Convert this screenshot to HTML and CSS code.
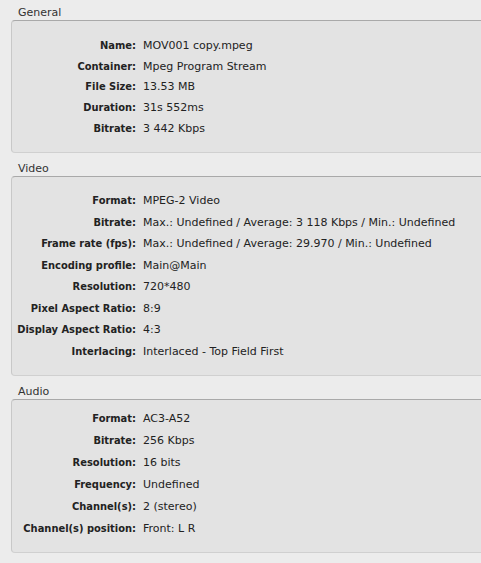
FILE: index.html
```html
<!DOCTYPE html>
<html>
<head>
<meta charset="utf-8">
<link rel="stylesheet" href="styles.css">
</head>
<body>
<section class="group">
  <div class="title">General</div>
  <div class="box general">
    <div class="k">Name:</div><div class="v">MOV001 copy.mpeg</div>
    <div class="k">Container:</div><div class="v">Mpeg Program Stream</div>
    <div class="k">File Size:</div><div class="v">13.53 MB</div>
    <div class="k">Duration:</div><div class="v">31s 552ms</div>
    <div class="k">Bitrate:</div><div class="v">3 442 Kbps</div>
  </div>
</section>
<section class="group">
  <div class="title">Video</div>
  <div class="box video">
    <div class="k">Format:</div><div class="v">MPEG-2 Video</div>
    <div class="k">Bitrate:</div><div class="v">Max.: Undefined / Average: 3 118 Kbps / Min.: Undefined</div>
    <div class="k">Frame rate (fps):</div><div class="v">Max.: Undefined / Average: 29.970 / Min.: Undefined</div>
    <div class="k">Encoding profile:</div><div class="v">Main@Main</div>
    <div class="k">Resolution:</div><div class="v">720*480</div>
    <div class="k">Pixel Aspect Ratio:</div><div class="v">8:9</div>
    <div class="k">Display Aspect Ratio:</div><div class="v">4:3</div>
    <div class="k">Interlacing:</div><div class="v">Interlaced - Top Field First</div>
  </div>
</section>
<section class="group">
  <div class="title">Audio</div>
  <div class="box audio">
    <div class="k">Format:</div><div class="v">AC3-A52</div>
    <div class="k">Bitrate:</div><div class="v">256 Kbps</div>
    <div class="k">Resolution:</div><div class="v">16 bits</div>
    <div class="k">Frequency:</div><div class="v">Undefined</div>
    <div class="k">Channel(s):</div><div class="v">2 (stereo)</div>
    <div class="k">Channel(s) position:</div><div class="v">Front: L R</div>
  </div>
</section>
</body>
</html>
```
FILE: styles.css
```css
html, body {
  margin: 0;
  padding: 0;
  background: #ececec;
  overflow: hidden;
}
body {
  width: 481px;
  height: 563px;
  font-family: "DejaVu Sans", "Lucida Grande", sans-serif;
  font-size: 11px;
  color: #222;
}
.group {
  margin-bottom: 3px;
}
.title {
  height: 20px;
  line-height: 25px;
  padding-left: 18px;
  color: #333;
}
.box {
  margin-left: 11px;
  margin-right: -10px;
  background: #e3e3e3;
  border: 1px solid #d0d0d0;
  border-top-color: #a9a9a9;
  border-left-color: #c8c8c8;
  border-radius: 4px;
  display: grid;
  grid-template-columns: 124px 1fr;
  column-gap: 7px;
  padding: 13px 0 13px 0;
}
.k {
  font-weight: bold;
  font-stretch: condensed;
  text-align: right;
  white-space: nowrap;
}
.v {
  white-space: nowrap;
}
.general { grid-auto-rows: 20.75px; padding-top: 14px; }
.video { grid-auto-rows: 21.57px; }
.audio { grid-auto-rows: 22px; padding-top: 7px; }
.k, .v { display: flex; align-items: center; }
.k { justify-content: flex-end; }
```
